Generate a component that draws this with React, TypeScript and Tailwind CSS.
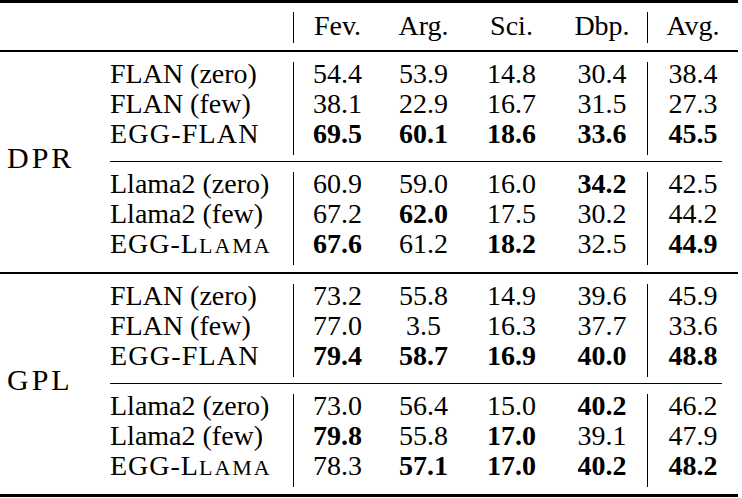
const cols = ["Fev.", "Arg.", "Sci.", "Dbp."];

// "*" marks a bold (best) value
const groups = [
  {
    name: "DPR",
    blocks: [
      [
        { m: "FLAN (zero)", v: ["54.4", "53.9", "14.8", "30.4", "38.4"] },
        { m: "FLAN (few)", v: ["38.1", "22.9", "16.7", "31.5", "27.3"] },
        { m: "EGG-FLAN", v: ["69.5*", "60.1*", "18.6*", "33.6*", "45.5*"] },
      ],
      [
        { m: "Llama2 (zero)", v: ["60.9", "59.0", "16.0", "34.2*", "42.5"] },
        { m: "Llama2 (few)", v: ["67.2", "62.0*", "17.5", "30.2", "44.2"] },
        { m: "EGG-LLAMA", v: ["67.6*", "61.2", "18.2*", "32.5", "44.9*"] },
      ],
    ],
  },
  {
    name: "GPL",
    blocks: [
      [
        { m: "FLAN (zero)", v: ["73.2", "55.8", "14.9", "39.6", "45.9"] },
        { m: "FLAN (few)", v: ["77.0", "3.5", "16.3", "37.7", "33.6"] },
        { m: "EGG-FLAN", v: ["79.4*", "58.7*", "16.9*", "40.0*", "48.8*"] },
      ],
      [
        { m: "Llama2 (zero)", v: ["73.0", "56.4", "15.0", "40.2*", "46.2"] },
        { m: "Llama2 (few)", v: ["79.8*", "55.8", "17.0*", "39.1", "47.9"] },
        { m: "EGG-LLAMA", v: ["78.3", "57.1*", "17.0*", "40.2*", "48.2*"] },
      ],
    ],
  },
];

const colW = ["w-[87px]", "w-[85px]", "w-[91px]", "w-[90px]"];

const Method = ({ m }: { m: string }) => {
  if (m === "EGG-LLAMA") {
    return (
      <span className="tracking-[1px]">
        EGG-L<span className="text-[22px] tracking-[2px]">LAMA</span>
      </span>
    );
  }
  if (m === "EGG-FLAN") {
    return <span className="tracking-[1.2px]">{m}</span>;
  }
  return <span>{m}</span>;
};

const Num = ({ v }: { v: string }) =>
  v.endsWith("*") ? <span className="font-bold">{v.slice(0, -1)}</span> : <span>{v}</span>;

const Block = ({ rows, h }: { rows: typeof groups[0]["blocks"][0]; h: string }) => (
  <div className={`flex ${h}`}>
    <div className="w-[183px] pt-[7px] flex flex-col">
      {rows.map((r) => (
        <div key={r.m} className="h-[30px] whitespace-nowrap">
          <Method m={r.m} />
        </div>
      ))}
    </div>
    <div className="w-px mt-[10px] h-[93px] bg-black" />
    {cols.map((c, i) => (
      <div key={c} className={`${colW[i]} pt-[7px] flex flex-col items-center`}>
        {rows.map((r) => (
          <div key={r.m} className="h-[30px]">
            <Num v={r.v[i]} />
          </div>
        ))}
      </div>
    ))}
    <div className="w-px mt-[10px] h-[93px] bg-black" />
    <div className="w-[90px] pt-[7px] flex flex-col items-center">
      {rows.map((r) => (
        <div key={r.m} className="h-[30px]">
          <Num v={r.v[4]} />
        </div>
      ))}
    </div>
  </div>
);

export default function App() {
  return (
    <div className="w-[742px] h-[498px] bg-white text-black font-[family-name:'Liberation_Serif','Times_New_Roman',serif] text-[28px] leading-[30px] overflow-hidden">
      <div className="w-[738px] h-[3px] bg-black" />

      {/* header */}
      <div className="flex h-[47px]">
        <div className="w-[293px]" />
        <div className="w-px mt-[9px] h-[31px] bg-black" />
        {cols.map((c, i) => (
          <div key={c} className={`${colW[i]} pt-[8px] text-center`}>
            {c}
          </div>
        ))}
        <div className="w-px mt-[9px] h-[31px] bg-black" />
        <div className="w-[90px] pt-[8px] text-center">Avg.</div>
      </div>
      <div className="w-[738px] h-[2px] bg-black" />

      {groups.map((g, gi) => (
        <div key={g.name}>
          <div className="flex h-[220px]">
            <div className="w-[110px] flex items-center pl-[7px] pb-[8px] text-[30px] tracking-[3px]">
              {g.name}
            </div>
            <div className="flex flex-col">
              <Block rows={g.blocks[0]} h="h-[109px]" />
              <div className="w-[612px] h-px bg-black" />
              <Block rows={g.blocks[1]} h="h-[110px]" />
            </div>
          </div>
          <div className={`w-[738px] bg-black ${gi === 0 ? "h-[2px]" : "h-[3px]"}`} />
        </div>
      ))}
    </div>
  );
}
